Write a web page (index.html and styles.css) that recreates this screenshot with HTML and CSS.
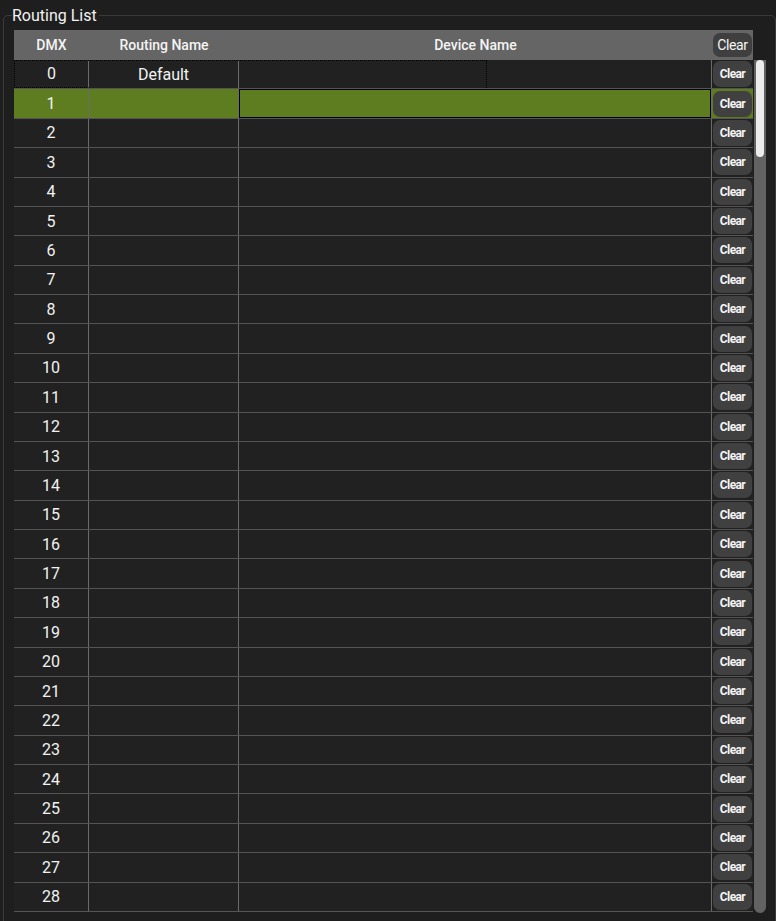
FILE: index.html
```html
<!DOCTYPE html>
<html>
<head>
<meta charset="utf-8">
<link rel="stylesheet" href="styles.css">
</head>
<body>
<fieldset class="panel">
  <legend class="panel-title">Routing List</legend>
  <div class="list-wrap">
    <div class="table">
      <div class="head">
        <div class="hcell">DMX</div>
        <div class="hcell">Routing Name</div>
        <div class="hcell">Device Name</div>
        <div class="hcell hclear"><button class="btn-head">Clear</button></div>
      </div>
      <div class="body" id="body"></div>
    </div>
    <div class="scroll"><div class="thumb"></div></div>
  </div>
</fieldset>
<script src="app.js"></script>
</body>
</html>
```

FILE: app.js
```js
const body = document.getElementById('body');
for (let i = 0; i <= 28; i++) {
  const row = document.createElement('div');
  row.className = 'row' + (i === 1 ? ' selected' : '') + (i === 0 ? ' focused' : '');
  row.innerHTML =
    '<div class="cell dmx">' + i + '</div>' +
    '<div class="cell name">' + (i === 0 ? 'Default' : '') + '</div>' +
    '<div class="cell device"></div>' +
    '<div class="cell clear"><button class="btn">Clear</button></div>' +
    (i === 0 ? '<div class="focus-ring"></div>' : '');
  body.appendChild(row);
}
```

FILE: styles.css
```css
html, body {
  margin: 0;
  padding: 0;
  background: #1e1e1e;
  font-family: Roboto, "Noto Sans", sans-serif;
  color: #eeeeee;
  overflow: hidden;
}
.panel {
  margin: 6px 0 0 3px;
  width: 773px;
  box-sizing: border-box;
  height: 940px;
  border: 1px solid #3a3a3a;
  border-radius: 5px;
  padding: 5px 0 0 10px;
}
.panel-title {
  font-size: 16px;
  line-height: 19px;
  padding: 0 2px 0 0;
  margin-left: -2px;
  color: #f2f2f2;
}
.list-wrap {
  display: flex;
  align-items: flex-start;
}
.table {
  width: 739px;
}
.head {
  display: grid;
  grid-template-columns: 75px 150px 473px 41px;
  height: 30px;
  background: #656565;
  align-items: center;
}
.hcell {
  text-align: center;
  font-size: 14px;
  font-weight: 500;
  color: #f4f4f4;
}
.hclear {
  display: flex;
  justify-content: flex-start;
}
.btn-head {
  width: 39px;
  height: 24px;
  margin-left: 1px;
  border: none;
  border-radius: 7px;
  background: #3f3f3f;
  color: #f4f4f4;
  font-family: Roboto, sans-serif;
  font-size: 14px;
  letter-spacing: -0.4px;
  padding: 0;
}
.row {
  position: relative;
  display: grid;
  grid-template-columns: 75px 150px 473px 41px;
  height: 29.38px;
  box-sizing: border-box;
  border-bottom: 1px solid #545454;
  background: #212121;
}
.cell {
  box-sizing: border-box;
  border-right: 1px solid #6a6a6a;
  display: flex;
  align-items: center;
  justify-content: center;
  font-size: 16px;
  color: #f2f2f2;
}
.cell.clear {
  border-right: none;
  justify-content: flex-start;
}
.btn {
  width: 39px;
  height: 26px;
  margin-left: 1px;
  border: none;
  border-radius: 7px;
  background: #404040;
  color: #f4f4f4;
  font-family: Roboto, sans-serif;
  font-weight: 700;
  font-size: 12px;
  letter-spacing: -0.6px;
  padding: 0;
}
.row.selected .dmx,
.row.selected .name,
.row.selected .device,
.row.selected .clear {
  background: #5e7d21;
}
.row.selected .device {
  box-shadow: inset 0 0 0 1px #000;
}
.row.focused .dmx {
  border-bottom: 1px dotted #000;
  border-left: 1px dotted #000;
}
.focus-ring {
  position: absolute;
  left: 0;
  top: 0;
  width: 473px;
  height: 28px;
  border-top: 1px dotted #000;
  border-right: 1px dotted #000;
  box-sizing: border-box;
  pointer-events: none;
}
.scroll {
  width: 12px;
  margin-top: 30px;
  margin-left: 1px;
  height: 853px;
  background: #626262;
  border-radius: 0 0 6px 6px;
  position: relative;
}
.thumb {
  position: absolute;
  left: 2px;
  top: 0;
  width: 8px;
  height: 97px;
  background: #ececec;
  border-radius: 4px;
}
```
